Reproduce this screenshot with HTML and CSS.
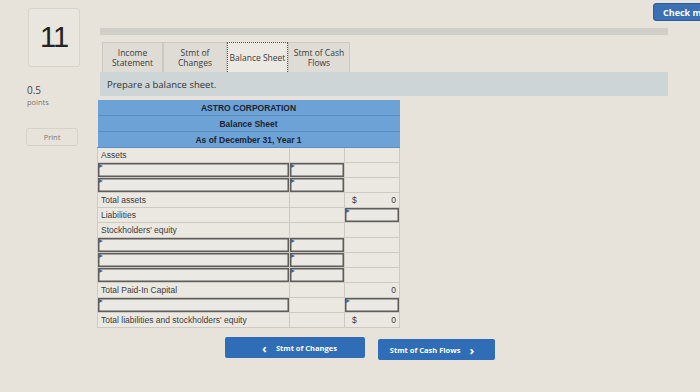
FILE: index.html
```html
<!DOCTYPE html>
<html lang="en">
<head>
  <meta charset="UTF-8" />
  <title>Balance Sheet</title>
  <link rel="stylesheet" href="styles.css">
</head>
<body>
  <div class="page">
    <div class="side">
      <div class="qnum">11</div>
      <div class="points">
        <div class="points-val">0.5</div>
        <div class="points-lbl">points</div>
      </div>
      <div class="print">Print</div>
    </div>

    <div class="main">
      <div class="topbar">
        <button class="check">Check my work</button>
      </div>
      <div class="progress"></div>

      <div class="tabs">
        <div class="tab">Income<br>Statement</div>
        <div class="tab">Stmt of<br>Changes</div>
        <div class="tab active">Balance Sheet</div>
        <div class="tab">Stmt of Cash<br>Flows</div>
      </div>
      <div class="instr">Prepare a balance sheet.</div>

      <table class="sheet">
        <colgroup>
          <col class="c-lbl">
          <col class="c-mid">
          <col class="c-amt">
        </colgroup>
        <tr class="head"><th colspan="3">ASTRO CORPORATION</th></tr>
        <tr class="head"><th colspan="3">Balance Sheet</th></tr>
        <tr class="head"><th colspan="3">As of December 31, Year 1</th></tr>
        <tr><td class="lbl">Assets</td><td></td><td></td></tr>
        <tr><td class="inp"></td><td class="inp"></td><td></td></tr>
        <tr><td class="inp"></td><td class="inp"></td><td></td></tr>
        <tr><td class="lbl">Total assets</td><td></td><td class="amt"><span>$</span><span>0</span></td></tr>
        <tr><td class="lbl">Liabilities</td><td></td><td class="inp"></td></tr>
        <tr><td class="lbl">Stockholders' equity</td><td></td><td></td></tr>
        <tr><td class="inp"></td><td class="inp"></td><td></td></tr>
        <tr><td class="inp"></td><td class="inp"></td><td></td></tr>
        <tr><td class="inp"></td><td class="inp"></td><td></td></tr>
        <tr><td class="lbl">Total Paid-In Capital</td><td></td><td class="amt"><span></span><span>0</span></td></tr>
        <tr><td class="inp"></td><td></td><td class="inp"></td></tr>
        <tr><td class="lbl">Total liabilities and stockholders' equity</td><td></td><td class="amt"><span>$</span><span>0</span></td></tr>
      </table>

      <div class="nav">
        <button class="nav-btn prev"><span class="arrow">&lsaquo;</span>Stmt of Changes</button>
        <button class="nav-btn next">Stmt of Cash Flows<span class="arrow">&rsaquo;</span></button>
      </div>
    </div>
  </div>
</body>
</html>
```

FILE: styles.css
```css
body {
  margin: 0;
  background: #e7e3db;
  font-family: 'Open Sans', 'Liberation Sans', sans-serif;
  color: #333;
  overflow: hidden;
}
.page {
  display: flex;
  width: 700px;
  height: 392px;
  overflow: hidden;
}
.side {
  width: 100px;
  flex: none;
  padding-top: 8px;
}
.qnum {
  margin-left: 28px;
  width: 52px;
  height: 59px;
  box-sizing: border-box;
  border: 1px solid #d8d4cc;
  border-radius: 3px;
  background: #e9e6df;
  display: flex;
  align-items: center;
  justify-content: center;
  font-family: 'Liberation Sans', sans-serif;
  font-size: 29px;
  color: #222;
  letter-spacing: -1px;
}
.points {
  margin: 17px 0 0 27px;
}
.points-val {
  font-size: 10px;
  color: #444;
  line-height: 13px;
}
.points-lbl {
  font-size: 7.5px;
  color: #7a7872;
  line-height: 10px;
}
.print {
  margin: 21px 0 0 26px;
  width: 52px;
  height: 18px;
  box-sizing: border-box;
  border: 1px solid #d6d2ca;
  border-radius: 3px;
  font-size: 7.5px;
  color: #777;
  display: flex;
  align-items: center;
  justify-content: center;
}
.main {
  width: 568px;
  flex: none;
}
.topbar {
  height: 18px;
  padding-top: 3px;
  display: flex;
  justify-content: flex-end;
  margin-right: -83px;
}
.check {
  width: 98px;
  height: 18px;
  border: 1px solid #2d5c98;
  border-radius: 3px;
  background: #3a70b4;
  color: #fff;
  font-family: 'Open Sans', sans-serif;
  font-weight: bold;
  font-size: 9px;
  text-align: left;
  padding: 0 0 0 9px;
}
.progress {
  margin-top: 7px;
  height: 7px;
  background: #d1cec7;
}
.tabs {
  display: flex;
  margin: 7px 0 0 2px;
  height: 30px;
}
.tab {
  height: 30px;
  box-sizing: border-box;
  border: 1px solid #cbc8c1;
  border-bottom: none;
  background: #dfdcd5;
  font-size: 8.5px;
  line-height: 10px;
  text-align: center;
  display: flex;
  align-items: center;
  justify-content: center;
  color: #3a3a3a;
}
.tab:nth-child(1) { width: 61px; }
.tab:nth-child(2) { width: 64px; }
.tab:nth-child(3) { width: 61px; }
.tab:nth-child(4) { width: 62px; }
.tab.active {
  background: #ece9e3;
  border: 1px dotted #555;
  border-bottom: none;
}
.instr {
  height: 24px;
  background: #ced5d6;
  font-size: 9.5px;
  padding-left: 7px;
  line-height: 26px;
  color: #333;
}
.sheet {
  margin: 4px 0 0 -3px;
  width: 302px;
  border-collapse: collapse;
  font-family: 'Liberation Sans', sans-serif;
  font-size: 8.5px;
  table-layout: fixed;
}
.c-lbl { width: 192px; }
.c-mid { width: 55px; }
.c-amt { width: 55px; }
.sheet td {
  height: 14px;
  padding: 0 3px;
  border: 1px solid #cdcac3;
  background: #ebe8e2;
  color: #3a3a3a;
  white-space: nowrap;
  overflow: hidden;
}
.sheet .head th {
  height: 15px;
  padding: 0;
  background: #6da2d7;
  border-bottom: 1px solid #5b8fc4;
  font-weight: bold;
  font-size: 8.5px;
  color: #1c2430;
}
.sheet td.inp {
  position: relative;
  background: #ebe9e4;
  box-shadow: inset 0 0 0 1.5px #5e5d5a;
}
.sheet td.inp::before {
  content: "";
  position: absolute;
  left: 1px;
  top: 1px;
  border-left: 4px solid #3e68a0;
  border-top: 2px solid transparent;
  border-bottom: 2px solid transparent;
}
.sheet td.amt span:first-child {
  float: left;
  padding-left: 4px;
}
.sheet td.amt span:last-child {
  float: right;
}
.nav {
  display: flex;
  gap: 13px;
  margin: 9px 0 0 125px;
  align-items: flex-start;
}
.nav-btn {
  height: 21px;
  border: none;
  border-radius: 2px;
  background: #2f6db6;
  color: #fff;
  font-family: 'Open Sans', sans-serif;
  font-weight: bold;
  font-size: 7.5px;
  display: flex;
  align-items: center;
  justify-content: center;
}
.nav-btn.prev {
  width: 140px;
}
.nav-btn.next {
  width: 117px;
  margin-top: 2px;
}
.arrow {
  font-size: 13px;
  margin: 0 9px;
  line-height: 10px;
}
```
